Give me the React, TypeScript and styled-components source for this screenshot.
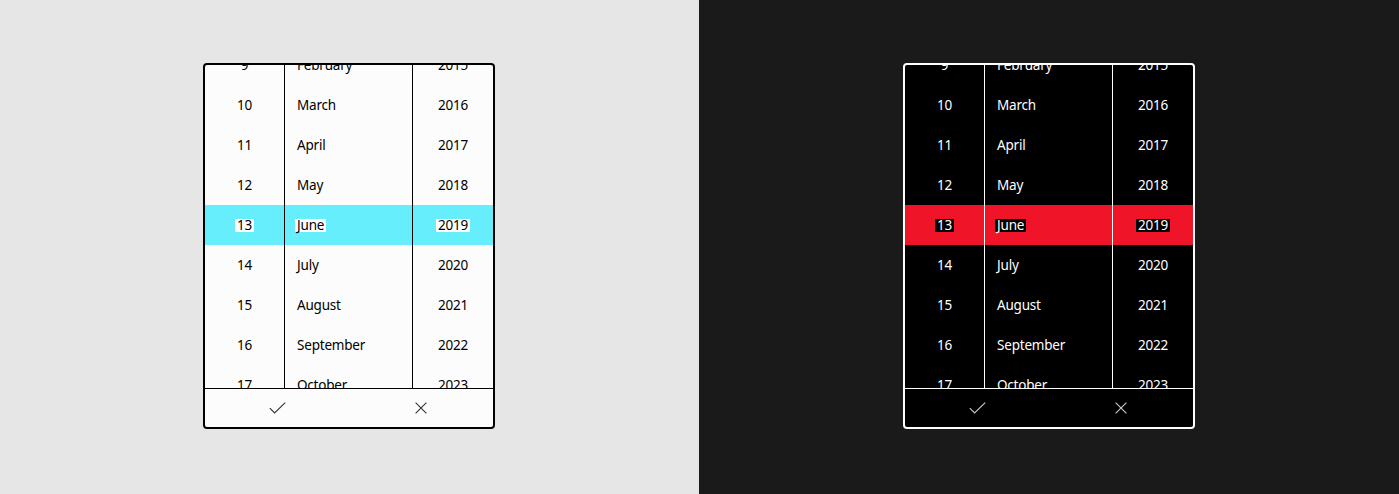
import React from "react";
import styled, { createGlobalStyle, ThemeProvider } from "styled-components";

const GlobalStyle = createGlobalStyle`
  html, body { margin: 0; padding: 0; }
  body { width: 1399px; height: 494px; overflow: hidden; font-family: "Noto Sans", "Open Sans", sans-serif; }
`;

type Theme = {
  pageBg: string;
  panelBg: string;
  line: string;
  text: string;
  accent: string;
  selectedTextBg: string;
  icon: string;
};

const light: Theme = {
  pageBg: "#e6e6e6",
  panelBg: "#fcfcfc",
  line: "#000000",
  text: "#000000",
  accent: "#66eefc",
  selectedTextBg: "#ffffff",
  icon: "#333333",
};

const dark: Theme = {
  pageBg: "#1a1a1a",
  panelBg: "#000000",
  line: "#ffffff",
  text: "#ffffff",
  accent: "#f01428",
  selectedTextBg: "#000000",
  icon: "#cccccc",
};

const Page = styled.div`
  display: grid;
  grid-template-columns: 699px 700px;
  height: 494px;
`;

const Half = styled.div<{ $inset: number }>`
  background: ${(p) => p.theme.pageBg};
  display: flex;
  justify-content: flex-start;
  align-items: flex-start;
  padding-top: 63px;
  padding-left: ${(p) => p.$inset}px;
  box-sizing: border-box;
`;

const Panel = styled.div`
  width: 292px;
  height: 366px;
  box-sizing: border-box;
  border: 2px solid ${(p) => p.theme.line};
  border-radius: 4px;
  background: ${(p) => p.theme.panelBg};
  display: flex;
  flex-direction: column;
  overflow: hidden;
`;

const Columns = styled.div`
  height: 323px;
  display: grid;
  grid-template-columns: 79px 128px 81px;
  overflow: hidden;
  border-bottom: 1px solid ${(p) => p.theme.line};
`;

const Column = styled.div<{ $divider?: boolean }>`
  border-left: ${(p) => (p.$divider ? `1px solid ${p.theme.line}` : "none")};
  display: flex;
  flex-direction: column;
  margin-top: -20px;
  min-width: 0;
`;

const Cell = styled.div<{ $selected?: boolean; $align: "center" | "left" }>`
  flex: 0 0 40px;
  height: 40px;
  box-sizing: border-box;
  display: flex;
  align-items: center;
  justify-content: ${(p) => (p.$align === "center" ? "center" : "flex-start")};
  padding-left: ${(p) => (p.$align === "left" ? "12px" : "0")};
  background: ${(p) => (p.$selected ? p.theme.accent : "transparent")};
  color: ${(p) => p.theme.text};
  font-size: 13.5px;
  letter-spacing: -0.2px;
  white-space: nowrap;
`;

const Label = styled.span<{ $selected?: boolean }>`
  display: inline-block;
  line-height: 13px;
  padding: 0 ${(p) => (p.$selected ? "2px" : "0")};
  margin: 0 ${(p) => (p.$selected ? "-2px" : "0")};
  background: ${(p) => (p.$selected ? p.theme.selectedTextBg : "transparent")};
`;

const Footer = styled.div`
  flex: 1;
  display: grid;
  grid-template-columns: 1fr 1fr;
`;

const FooterButton = styled.button`
  border: none;
  background: transparent;
  padding: 0;
  display: flex;
  align-items: center;
  justify-content: center;
  color: ${(p) => p.theme.icon};
  cursor: pointer;
`;

const days = ["9", "10", "11", "12", "13", "14", "15", "16", "17"];
const months = [
  "February",
  "March",
  "April",
  "May",
  "June",
  "July",
  "August",
  "September",
  "October",
];
const years = ["2015", "2016", "2017", "2018", "2019", "2020", "2021", "2022", "2023"];
const SELECTED = 4;

const CheckIcon = () => (
  <svg width="17" height="12" viewBox="0 0 17 12" fill="none">
    <path d="M0.8 6.2 L5.6 11 L16.2 0.6" stroke="currentColor" strokeWidth="1.1" />
  </svg>
);

const CloseIcon = () => (
  <svg width="12" height="12" viewBox="0 0 12 12" fill="none">
    <path d="M0.6 0.6 L11.4 11.4 M11.4 0.6 L0.6 11.4" stroke="currentColor" strokeWidth="1.1" />
  </svg>
);

const PickerColumn: React.FC<{ items: string[]; align: "center" | "left"; divider?: boolean }> = ({
  items,
  align,
  divider,
}) => (
  <Column $divider={divider}>
    {items.map((item, i) => (
      <Cell key={item} $align={align} $selected={i === SELECTED}>
        <Label $selected={i === SELECTED}>{item}</Label>
      </Cell>
    ))}
  </Column>
);

const DatePickerFlyout: React.FC = () => (
  <Panel>
    <Columns>
      <PickerColumn items={days} align="center" />
      <PickerColumn items={months} align="left" divider />
      <PickerColumn items={years} align="center" divider />
    </Columns>
    <Footer>
      <FooterButton aria-label="Accept">
        <CheckIcon />
      </FooterButton>
      <FooterButton aria-label="Dismiss">
        <CloseIcon />
      </FooterButton>
    </Footer>
  </Panel>
);

export default function App() {
  return (
    <>
      <GlobalStyle />
      <Page>
        <ThemeProvider theme={light}>
          <Half $inset={203}>
            <DatePickerFlyout />
          </Half>
        </ThemeProvider>
        <ThemeProvider theme={dark}>
          <Half $inset={204}>
            <DatePickerFlyout />
          </Half>
        </ThemeProvider>
      </Page>
    </>
  );
}
